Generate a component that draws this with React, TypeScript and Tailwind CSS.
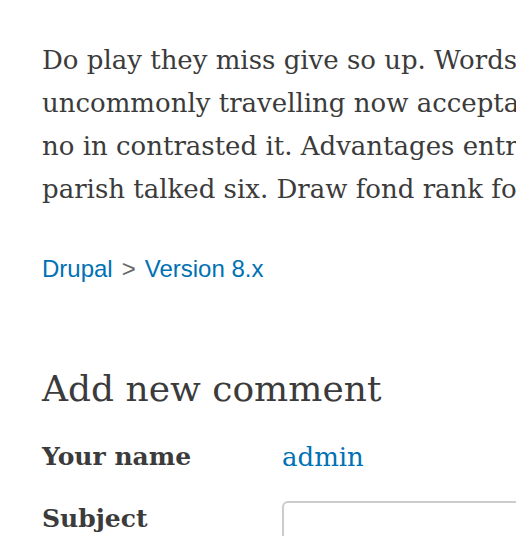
import React from 'react';

const serif = "font-['DejaVu_Serif',Georgia,serif]";

export default function App() {
  return (
    <div className="h-[536px] w-full overflow-hidden bg-white text-[#3b3b3b]">
      <div className="pl-[42px] pt-[39px]">
        <p className={`${serif} whitespace-nowrap text-[26px] leading-[43px]`}>
          Do play they miss give so up. Words to up style of since world.
          <br />
          uncommonly travelling now acceptance bed compliment solicitude.
          <br />
          no in contrasted it. Advantages entreaties mr he apartments do.
          <br />
          parish talked six. Draw fond rank form nor the day eat.
        </p>

        {/* breadcrumb */}
        <nav className="mt-[44px] flex items-center gap-[9px] font-['Liberation_Sans',Arial,sans-serif] text-[24px] leading-[28px]">
          <a className="text-[#0071b3]">Drupal</a>
          <span className="text-[#666]">&gt;</span>
          <a className="text-[#0071b3]">Version 8.x</a>
        </nav>

        <h2 className={`${serif} mt-[82px] text-[36px] leading-[48px] text-[#3b3b3b]`}>
          Add new comment
        </h2>

        <div className={`${serif} mt-[24px] grid grid-cols-[240px_1fr] gap-y-[14px] text-[25px] leading-[40px]`}>
          <div className="font-bold">Your name</div>
          <div className="text-[26px] text-[#0071b3]">admin</div>
          <div className="pt-[8px] font-bold">Subject</div>
          <div className="pt-[10px]">
            <div className="h-[60px] w-[400px] rounded-[6px] border-2 border-[#ccc]" />
          </div>
        </div>
      </div>
    </div>
  );
}
